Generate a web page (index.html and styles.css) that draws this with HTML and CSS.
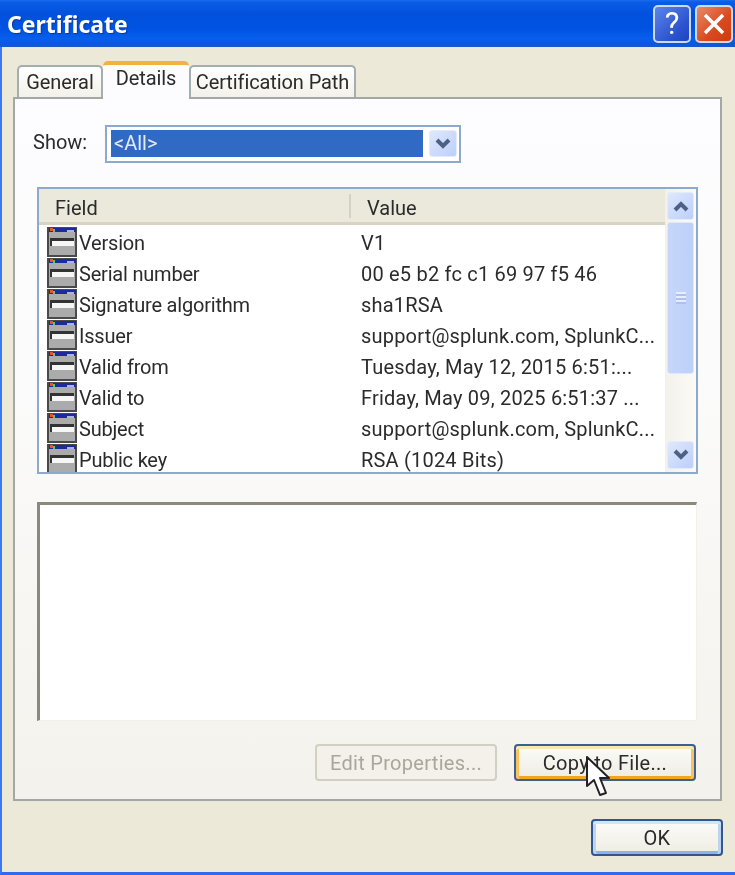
FILE: index.html
```html
<!DOCTYPE html>
<html lang="en">
<head>
  <meta charset="UTF-8">
  <title>Certificate</title>
  <link rel="stylesheet" href="styles.css">
</head>
<body>
  <svg class="defs" width="0" height="0">
    <symbol id="field-icon" viewBox="0 0 30 30">
      <rect x="0" y="0" width="30" height="30" fill="#4a4a4a"/>
      <rect x="2" y="2" width="26" height="26" fill="#ababab"/>
      <rect x="2" y="1" width="27" height="4" fill="#1c2a9c"/>
      <rect x="3" y="1" width="3" height="3" fill="#e8552c"/>
      <rect x="6" y="2" width="2" height="3" fill="#4fcf5a"/>
      <rect x="20" y="3" width="7" height="2" fill="#aab6e2"/>
      <rect x="3" y="14" width="24" height="5" fill="#f6f6f6"/>
      <rect x="3" y="11" width="24" height="3" fill="#333"/>
      <rect x="3" y="11" width="2" height="8" fill="#333"/>
    </symbol>
  </svg>

  <div class="window">
    <div class="titlebar">
      <span class="title">Certificate</span>
      <span class="cap-btn cap-help">?</span>
      <span class="cap-btn cap-close">
        <svg width="26" height="26" viewBox="0 0 26 26"><path d="M4 4 L22 22 M22 4 L4 22" stroke="#fff" stroke-width="3.5"/></svg>
      </span>
    </div>

    <div class="client">
      <div class="tabs">
        <div class="tab tab-general">General</div>
        <div class="tab tab-active">Details</div>
        <div class="tab tab-path">Certification Path</div>
      </div>

      <div class="panel">
        <div class="show-row">
          <span class="show-label">Show:</span>
          <div class="select">
            <span class="select-value">&lt;All&gt;</span>
            <span class="select-btn">
              <svg width="18" height="14" viewBox="0 0 18 14"><path d="M3 3 L9 9 L15 3" fill="none" stroke="#4d6185" stroke-width="4"/></svg>
            </span>
          </div>
        </div>

        <div class="list">
          <div class="list-main">
            <div class="list-head">
              <span class="head-field">Field</span>
              <span class="head-value">Value</span>
            </div>
            <div class="rows">
              <div class="row"><svg class="row-icon"><use href="#field-icon"/></svg><span class="row-field">Version</span><span class="row-value">V1</span></div>
              <div class="row"><svg class="row-icon"><use href="#field-icon"/></svg><span class="row-field">Serial number</span><span class="row-value">00 e5 b2 fc c1 69 97 f5 46</span></div>
              <div class="row"><svg class="row-icon"><use href="#field-icon"/></svg><span class="row-field">Signature algorithm</span><span class="row-value">sha1RSA</span></div>
              <div class="row"><svg class="row-icon"><use href="#field-icon"/></svg><span class="row-field">Issuer</span><span class="row-value">support@splunk.com, SplunkC...</span></div>
              <div class="row"><svg class="row-icon"><use href="#field-icon"/></svg><span class="row-field">Valid from</span><span class="row-value">Tuesday, May 12, 2015 6:51:...</span></div>
              <div class="row"><svg class="row-icon"><use href="#field-icon"/></svg><span class="row-field">Valid to</span><span class="row-value">Friday, May 09, 2025 6:51:37 ...</span></div>
              <div class="row"><svg class="row-icon"><use href="#field-icon"/></svg><span class="row-field">Subject</span><span class="row-value">support@splunk.com, SplunkC...</span></div>
              <div class="row"><svg class="row-icon"><use href="#field-icon"/></svg><span class="row-field">Public key</span><span class="row-value">RSA (1024 Bits)</span></div>
            </div>
          </div>
          <div class="scrollbar">
            <div class="sb-btn">
              <svg width="18" height="14" viewBox="0 0 18 14"><path d="M3 11 L9 5 L15 11" fill="none" stroke="#4d6185" stroke-width="4"/></svg>
            </div>
            <div class="sb-thumb"><span class="sb-grip"></span></div>
            <div class="sb-btn sb-down">
              <svg width="18" height="14" viewBox="0 0 18 14"><path d="M3 3 L9 9 L15 3" fill="none" stroke="#4d6185" stroke-width="4"/></svg>
            </div>
          </div>
        </div>

        <div class="detail-box"></div>

        <div class="panel-buttons">
          <div class="btn btn-disabled">Edit Properties...</div>
          <div class="btn btn-hot">Copy to File...
            <svg class="cursor" width="26" height="42" viewBox="0 0 26 42">
              <path d="M2 1 L2 30 L9 24 L15 39 L21 37 L15 22 L24 22 Z" fill="#fff" stroke="#222" stroke-width="2" stroke-linejoin="round"/>
            </svg>
          </div>
        </div>
      </div>

      <div class="footer">
        <div class="btn btn-default">OK</div>
      </div>
    </div>
  </div>
</body>
</html>
```

FILE: styles.css
```css
*{
  box-sizing: border-box;
}
html,body{
  margin: 0;
  height: 100%;
  overflow: hidden;
}
body{
  font-family: Roboto, "Noto Sans", sans-serif;
  font-size: 20px;
  color: #2b2b2b;
  background: #ece9d8;
}
.defs{
  display: block;
  height: 0;
}
/* the source is an upscaled capture, so everything is a little soft */
.window{
  width: 735px;
  height: 875px;
  display: flex;
  flex-direction: column;
  background: #ece9d8;
  border-left: 2px solid #3c78f0;
  border-bottom: 3px solid #2f6bf0;
  filter: blur(0.7px);
}

/* title bar */
.titlebar{
  height: 47px;
  margin-left: -2px;
  padding: 0 2px 0 7px;
  display: flex;
  align-items: center;
  gap: 4px;
  background: linear-gradient(#1a6cf0 0, #0a5ce6 5%, #0151dd 30%, #0052e2 60%, #075fec 82%, #0858e0 93%, #1c56c8 100%);
}
.title{
  flex: 1;
  color: #fff;
  font-family: "Noto Sans", sans-serif;
  font-size: 23px;
  font-weight: 700;
  text-shadow: 1px 1px 1px #0b3a9a;
}
.cap-btn{
  width: 38px;
  height: 38px;
  display: flex;
  align-items: center;
  justify-content: center;
  border: 2px solid #cfd9ee;
  border-radius: 5px;
  color: #fff;
}
.cap-help{
  background: linear-gradient(135deg, #5c85ea, #2a52cf 70%, #1f45bc);
  font-size: 31px;
  line-height: 1;
}
.cap-close{
  background: linear-gradient(135deg, #e88a68, #d9491f 60%, #cf3a10);
}

/* tabs */
.client{
  flex: 1;
  padding: 14px 10px 0 11px;
  display: flex;
  flex-direction: column;
}
.tabs{
  height: 36px;
  padding-left: 4px;
  display: flex;
  align-items: flex-end;
  position: relative;
  z-index: 1;
}
.tab{
  height: 32px;
  padding-top: 3px;
  text-align: center;
  letter-spacing: -0.1px;
  background: linear-gradient(#fff, #f3f1e8);
  border: 2px solid #a3aeb0;
  border-bottom: none;
  border-radius: 5px 5px 0 0;
}
.tab-general{
  width: 86px;
}
.tab-path{
  width: 167px;
}
.tab-active{
  width: 86px;
  height: 38px;
  margin-bottom: -2px;
  padding-top: 1px;
  background: #fcfcfe;
  border: none;
  border-top: 4px solid #f5b042;
}

/* panel */
.panel{
  height: 704px;
  width: 709px;
  padding: 26px 24px 0 18px;
  border: 2px solid #a3a8a6;
  background: linear-gradient(#fdfdff 0, #fbfbfb 40%, #f4f2ec 100%);
}
.show-row{
  height: 38px;
  display: flex;
  align-items: center;
}
.show-label{
  width: 72px;
  margin-top: -4px;
}
.select{
  width: 356px;
  height: 38px;
  padding: 3px 2px 4px 4px;
  display: flex;
  align-items: stretch;
  gap: 6px;
  background: #fff;
  border: 2px solid #8da9cf;
}
.select-value{
  flex: 1;
  padding-left: 3px;
  line-height: 27px;
  color: #e3ebfa;
  background: #316ac5;
}
.select-btn,.sb-btn{
  display: flex;
  align-items: center;
  justify-content: center;
  background: linear-gradient(135deg, #dfe8fd, #bccffa);
  border: 1px solid #e4ecfc;
  border-radius: 3px;
}
.select-btn{
  width: 28px;
}

/* list */
.list{
  width: 661px;
  height: 287px;
  margin: 24px 0 0 4px;
  display: flex;
  background: #fff;
  border: 2px solid #8da9cf;
}
.list-main{
  width: 626px;
  overflow: hidden;
}
.list-head{
  height: 36px;
  position: relative;
  padding-left: 16px;
  line-height: 38px;
  background: #ebe9db;
  border-bottom: 3px solid #d8d4c4;
}
.head-value{
  position: absolute;
  left: 310px;
  top: 5px;
  height: 24px;
  padding-left: 16px;
  line-height: 28px;
  border-left: 2px solid #d5d2c2;
}
.rows{
  margin-top: 3px;
}
.row{
  height: 31px;
  padding-left: 8px;
  display: flex;
  align-items: flex-start;
  white-space: nowrap;
}
.row:last-child{
  height: 27px;
}
.row-icon{
  width: 30px;
  height: 30px;
  flex: none;
  margin-top: -1px;
}
.row-field{
  width: 284px;
  padding-left: 2px;
  line-height: 24px;
  margin-top: 3px;
  letter-spacing: -0.2px;
}
.row-value{
  line-height: 24px;
  margin-top: 3px;
  letter-spacing: 0.2px;
}
.scrollbar{
  width: 31px;
  padding: 3px 2px;
  display: flex;
  flex-direction: column;
  background: linear-gradient(90deg, #f3f1ea, #fbfaf6);
}
.sb-btn{
  height: 28px;
  flex: none;
}
.sb-thumb{
  height: 152px;
  margin-top: 2px;
  display: flex;
  align-items: center;
  justify-content: center;
  background: linear-gradient(90deg, #c6d6fa, #bdd0f8);
  border: 1px solid #dfe8fc;
  border-radius: 3px;
}
.sb-grip{
  width: 10px;
  height: 12px;
  background: repeating-linear-gradient(#e6edfd 0 2px, #aebff0 2px 4px);
}
.sb-down{
  margin-top: auto;
}

/* lower box and buttons */
.detail-box{
  width: 660px;
  height: 219px;
  margin: 28px 0 0 4px;
  background: #fff;
  border-top: 3px solid #8a897c;
  border-left: 3px solid #8a897c;
  border-right: 1px solid #f3f1e6;
  border-bottom: 1px solid #f3f1e6;
}
.panel-buttons{
  margin-top: 23px;
  display: flex;
  justify-content: flex-end;
  gap: 17px;
}
.btn{
  width: 182px;
  height: 37px;
  display: flex;
  align-items: center;
  justify-content: center;
  position: relative;
  border-radius: 4px;
  letter-spacing: 0.3px;
  background: linear-gradient(#fbfbf8, #eeece3);
}
.btn-disabled{
  color: #a8a79b;
  background: #f3f1ea;
  border: 2px solid #d2d0c3;
}
.btn-hot{
  border: 2px solid #3f5f8c;
  box-shadow: inset 0 3px 0 #fbe6b5, inset 3px 0 0 #f8c35f, inset -3px 0 0 #f8c35f, inset 0 -3px 0 #f2a61e;
}
.cursor{
  position: absolute;
  left: 69px;
  top: 10px;
}
.footer{
  margin-top: 18px;
  padding-right: 2px;
  display: flex;
  justify-content: flex-end;
}
.btn-default{
  width: 132px;
  border: 2px solid #31578f;
  box-shadow: inset 0 3px 0 #d3e3fa, inset 3px 0 0 #bcd3f2, inset -3px 0 0 #bcd3f2, inset 0 -3px 0 #8fb2e4;
}
```
